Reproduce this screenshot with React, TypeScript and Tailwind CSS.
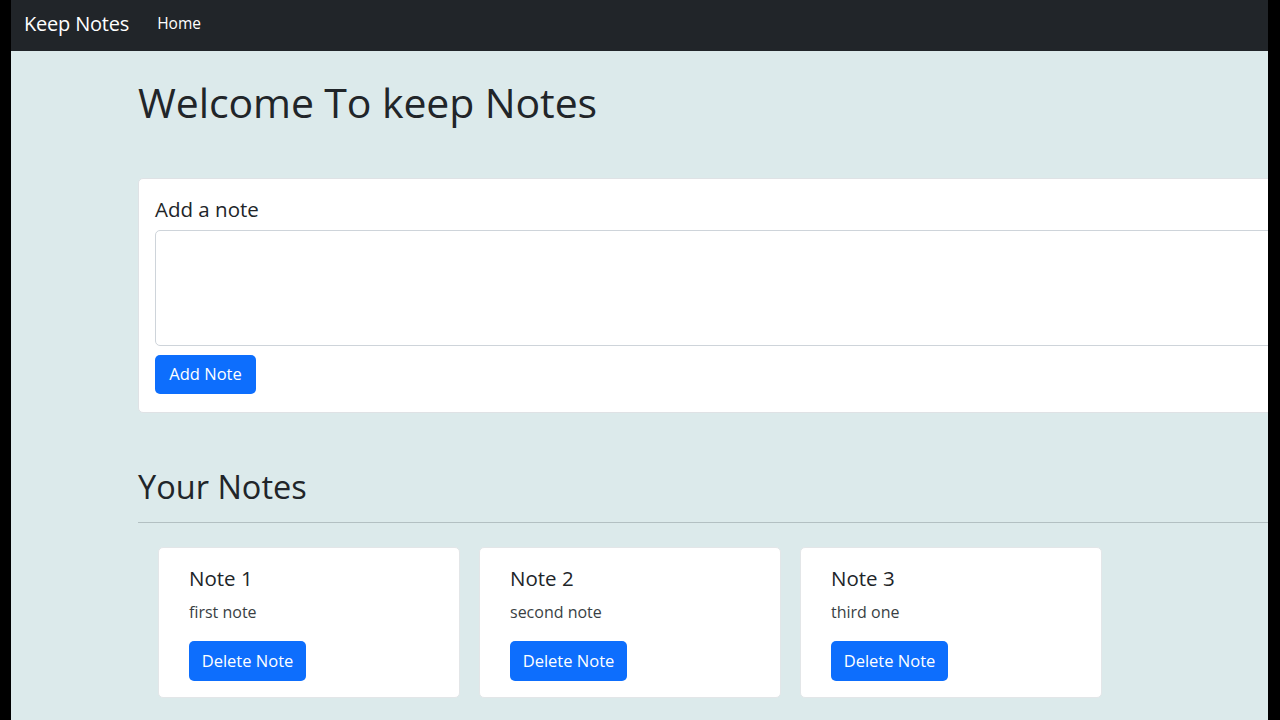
import React from "react";

const notes = [
  { title: "Note 1", body: "first note" },
  { title: "Note 2", body: "second note" },
  { title: "Note 3", body: "third one" },
];

export default function App() {
  return (
    <div className="flex h-[720px] w-[1280px] overflow-hidden bg-black font-['Open_Sans',sans-serif] text-[#212529]">
      <div className="w-[11px] shrink-0 bg-black" />
      <div className="flex-1 overflow-hidden bg-[#dceaeb]">
        {/* Navbar */}
        <nav className="flex h-[51px] items-center bg-[#212529] pb-[4px] pl-[13px]">
          <span className="text-[20px] tracking-[-0.2px] text-white">Keep Notes</span>
          <span className="ml-[28px] text-[15.5px] text-white">Home</span>
        </nav>

        <div className="pl-[127px]">
          <h1 className="mt-[27px] text-[41px] font-normal leading-[1.2] tracking-[-0.1px]">
            Welcome To keep Notes
          </h1>

          {/* Add note card */}
          <div className="mt-[51px] w-[1200px] rounded-[5px] border border-[#dfe2e5] bg-white px-[16px] pb-[18px] pt-[18px]">
            <label className="block text-[20.5px] leading-[1.2]">Add a note</label>
            <textarea className="mt-[8px] block h-[116px] w-full resize-none rounded-[5px] border border-[#ced4da] bg-white" />
            <button className="mt-[9px] h-[39px] w-[101px] rounded-[5px] bg-[#0d6efd] text-[16.5px] text-white">
              Add Note
            </button>
          </div>

          <h2 className="mt-[54px] text-[32.5px] font-normal leading-[1.2]">Your Notes</h2>
          <hr className="mt-[16px] w-[1200px] border-t border-[#b3c0c2]" />

          {/* Notes */}
          <div className="mt-[24px] flex gap-[19px] pl-[20px]">
            {notes.map((n) => (
              <div
                key={n.title}
                className="h-[151px] w-[302px] rounded-[5px] border border-[#e3e6e8] bg-white pl-[30px] pt-[18px]"
              >
                <h5 className="text-[20.5px] leading-[1.2]">{n.title}</h5>
                <p className="mt-[12px] text-[16px] leading-[1.3] text-[#3a3f44]">{n.body}</p>
                <button className="mt-[18px] h-[40px] w-[117px] rounded-[5px] bg-[#0d6efd] text-[16.5px] text-white">
                  Delete Note
                </button>
              </div>
            ))}
          </div>
        </div>
      </div>
      <div className="w-[12px] shrink-0 bg-black" />
    </div>
  );
}
